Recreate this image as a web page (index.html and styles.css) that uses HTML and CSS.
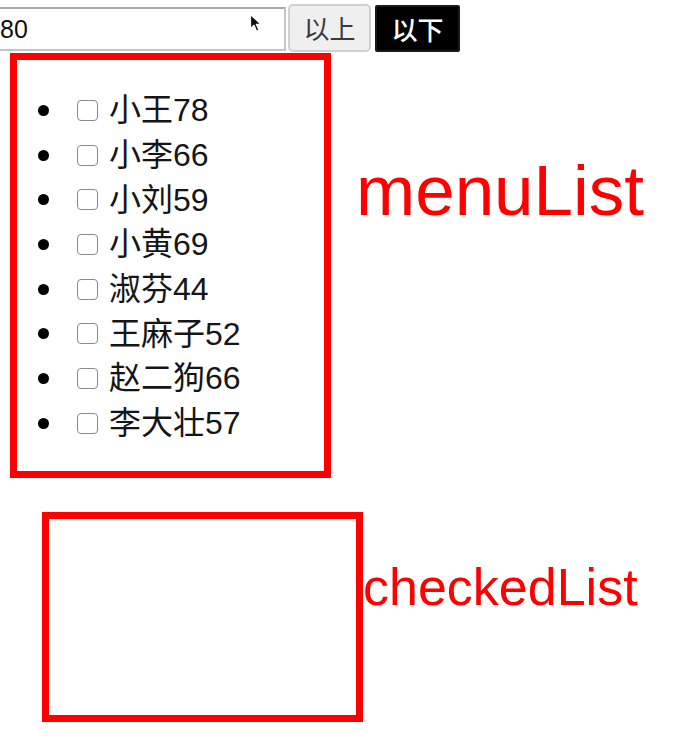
FILE: index.html
```html
<!DOCTYPE html>
<html lang="zh">
<head>
<meta charset="utf-8">
<title>menuList</title>
<link rel="stylesheet" href="styles.css">
</head>
<body>
<div class="toolbar">
  <div class="field">
    <input class="score" type="text" value="80">
    <svg class="pointer" width="14" height="20" viewBox="0 0 14 20" aria-hidden="true">
      <path d="M1.5 1.5 L1.5 15.5 L5 12.3 L7.6 18.2 L10 17.1 L7.4 11.4 L12 11.4 Z" fill="#111" stroke="#fff" stroke-width="1.2" stroke-linejoin="round"/>
    </svg>
  </div>
  <button class="btn btn-up" type="button">以上</button>
  <button class="btn btn-down" type="button">以下</button>
</div>

<div class="row row-menu">
  <div class="box menu-box">
    <ul class="menu">
      <li class="item"><input class="check" type="checkbox"><span class="name">小王78</span></li>
      <li class="item"><input class="check" type="checkbox"><span class="name">小李66</span></li>
      <li class="item"><input class="check" type="checkbox"><span class="name">小刘59</span></li>
      <li class="item"><input class="check" type="checkbox"><span class="name">小黄69</span></li>
      <li class="item"><input class="check" type="checkbox"><span class="name">淑芬44</span></li>
      <li class="item"><input class="check" type="checkbox"><span class="name">王麻子52</span></li>
      <li class="item"><input class="check" type="checkbox"><span class="name">赵二狗66</span></li>
      <li class="item"><input class="check" type="checkbox"><span class="name">李大壮57</span></li>
    </ul>
  </div>
  <span class="label label-menu">menuList</span>
</div>

<div class="row row-checked">
  <div class="box checked-box"></div>
  <span class="label label-checked">checkedList</span>
</div>
</body>
</html>
```

FILE: styles.css
```css
html, body {
  margin: 0;
  padding: 0;
  background: #ffffff;
}

body {
  width: 678px;
  height: 750px;
  overflow: hidden;
  font-family: "Liberation Sans", "Noto Sans CJK SC", sans-serif;
  color: #111111;
}

.toolbar {
  display: flex;
  align-items: flex-start;
  height: 52px;
  padding-top: 4px;
  box-sizing: border-box;
}

.field {
  position: relative;
  margin-left: -8px;
  margin-top: 3px;
}

.score {
  display: block;
  box-sizing: border-box;
  width: 294px;
  height: 44px;
  padding: 0 0 0 6px;
  margin: 0;
  border: 2px solid #c4c4c4;
  border-top-color: #a8a8a8;
  background: #ffffff;
  font-family: "Liberation Sans", sans-serif;
  font-size: 25px;
  color: #111111;
  outline: none;
}

.pointer {
  position: absolute;
  left: 257px;
  top: 6px;
}

.btn {
  box-sizing: border-box;
  height: 48px;
  margin: 0;
  padding: 0;
  font-family: "Noto Sans CJK SC", sans-serif;
  font-size: 26px;
  line-height: 1;
  cursor: default;
}

.btn-up {
  width: 83px;
  margin-left: 2px;
  background: #efefef;
  border: 2px solid #d0d0d0;
  border-radius: 5px;
  color: #3a3a3a;
}

.btn-down {
  width: 85px;
  margin-left: 4px;
  margin-top: 1px;
  height: 47px;
  background: #000000;
  border: 2px solid #1a1a1a;
  border-radius: 2px;
  color: #ffffff;
  font-weight: 500;
}

.row {
  display: flex;
  align-items: flex-start;
}

.box {
  box-sizing: border-box;
  border: 7px solid #ff0000;
  background: #ffffff;
  flex: none;
}

.menu-box {
  width: 321px;
  height: 425px;
  margin-left: 10px;
  margin-top: 1px;
}

.menu {
  list-style: none;
  margin: 28px 0 0 0;
  padding: 0;
}

.item {
  display: flex;
  align-items: center;
  height: 44.7px;
}

.item::before {
  content: "";
  flex: none;
  width: 11px;
  height: 11px;
  margin-left: 21px;
  border-radius: 50%;
  background: #000000;
}

.check {
  appearance: none;
  -webkit-appearance: none;
  flex: none;
  box-sizing: border-box;
  width: 21px;
  height: 21px;
  margin: 0 0 0 28px;
  border: 1.6px solid #8a8a8a;
  border-radius: 4px;
  background: #ffffff;
}

.name {
  margin-left: 11px;
  font-size: 32px;
  line-height: 1;
  color: #151515;
  white-space: nowrap;
}

.label {
  color: #ff0000;
  font-family: "Liberation Sans", sans-serif;
  line-height: 1;
  white-space: nowrap;
}

.label-menu {
  font-size: 71px;
  margin-left: 25px;
  margin-top: 103px;
}

.row-checked {
  margin-top: 34px;
}

.checked-box {
  width: 321px;
  height: 210px;
  margin-left: 42px;
}

.label-checked {
  font-size: 52px;
  margin-top: 49px;
}
```
